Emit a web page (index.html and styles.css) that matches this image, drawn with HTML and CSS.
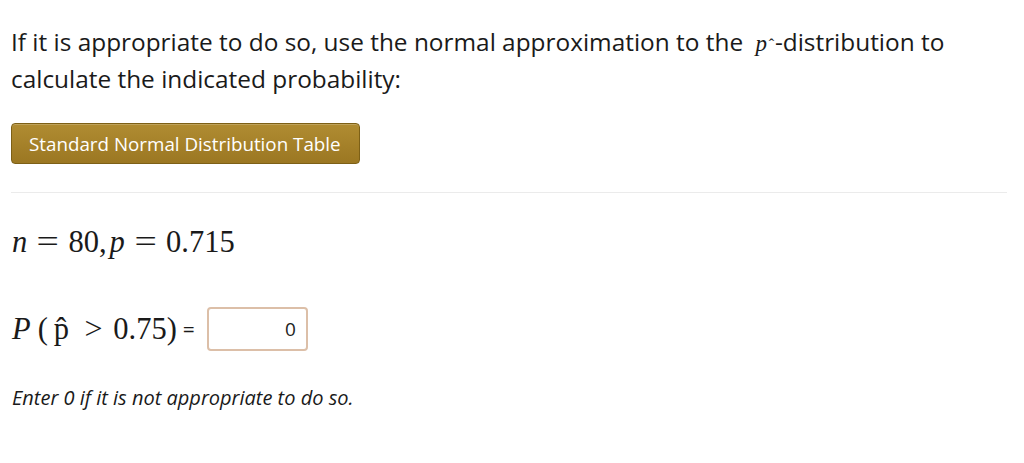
FILE: index.html
```html
<!DOCTYPE html>
<html>
<head>
<meta charset="utf-8">
<link rel="stylesheet" href="styles.css">
</head>
<body>
<div class="page">
  <p class="question">If it is appropriate to do so, use the normal approximation to the <span class="mi">p</span><span class="hat">ˆ</span>-distribution to<br>calculate the indicated probability:</p>
  <div class="btn-row"><button class="btn">Standard Normal Distribution Table</button></div>
  <hr class="rule">
  <div class="given"><span class="mi">n</span><span class="mo">=</span>80,<span class="mi p">p</span><span class="mo">=</span>0.715</div>
  <div class="answer-row">
    <span class="mi">P</span><span class="paren">(</span><span class="phat">p̂</span><span class="gt">&gt;</span><span class="num">0.75)</span>
    <span class="eq">=</span>
    <span class="input">0</span>
  </div>
  <p class="note">Enter 0 if it is not appropriate to do so.</p>
</div>
</body>
</html>
```
FILE: styles.css
```css
html, body {
  margin: 0;
  padding: 0;
  background: #ffffff;
}
.page {
  padding: 23px 17px 0 11px;
  font-family: "Open Sans", "Noto Sans", sans-serif;
  color: #1a1a1a;
}
.question {
  margin: 0;
  font-size: 24.4px;
  line-height: 37px;
  white-space: nowrap;
}
.question .mi {
  font-family: "Liberation Serif", serif;
  font-style: italic;
  font-size: 23px;
  line-height: 1;
  margin-left: 6px;
}
.question .hat {
  font-size: 17px;
  line-height: 1;
  margin-left: 1px;
}
.btn-row {
  margin-top: 26px;
  line-height: 1;
}
.btn {
  width: 349px;
  height: 41px;
  border: 1px solid #7d6016;
  border-radius: 4px;
  background: linear-gradient(#b08c32, #9b7722);
  color: #ffffff;
  font-family: "Open Sans", "Noto Sans", sans-serif;
  font-size: 18.8px;
  text-align: left;
  padding: 0 0 0 17px;
  box-shadow: inset 0 1px 0 rgba(255,255,255,0.2);
  display: block;
}
.rule {
  margin: 28px 0 0 0;
  border: 0;
  border-top: 1px solid #ebebeb;
}
.given {
  margin-top: 32px;
  font-family: "Liberation Serif", serif;
  font-size: 30.5px;
  line-height: 34px;
  padding-left: 1px;
  white-space: nowrap;
}
.mi {
  font-style: italic;
}
.mo {
  display: inline-block;
  transform: scaleX(1.3);
  margin: 0 12px;
}
.given .p {
  margin-left: 3px;
}
.answer-row {
  margin-top: 48px;
  display: flex;
  align-items: center;
  font-family: "Liberation Serif", serif;
  font-size: 30.5px;
  padding-left: 1px;
  white-space: nowrap;
}
.paren {
  margin-left: 7px;
}
.phat {
  margin-left: 6px;
}
.gt {
  margin-left: 16px;
  display: inline-block;
  transform: scaleX(1.05);
}
.num {
  margin-left: 11px;
}
.eq {
  font-family: "Open Sans", sans-serif;
  font-size: 21px;
  margin-left: 6px;
  margin-right: 12px;
}
.input {
  box-sizing: border-box;
  width: 101px;
  height: 44px;
  border: 2px solid #dcbfa8;
  border-radius: 4px;
  font-family: "Open Sans", sans-serif;
  font-size: 19px;
  color: #222;
  display: flex;
  align-items: center;
  justify-content: flex-end;
  padding-right: 10px;
}
.note {
  margin: 33px 0 0 1px;
  font-style: italic;
  font-size: 20px;
}
```
